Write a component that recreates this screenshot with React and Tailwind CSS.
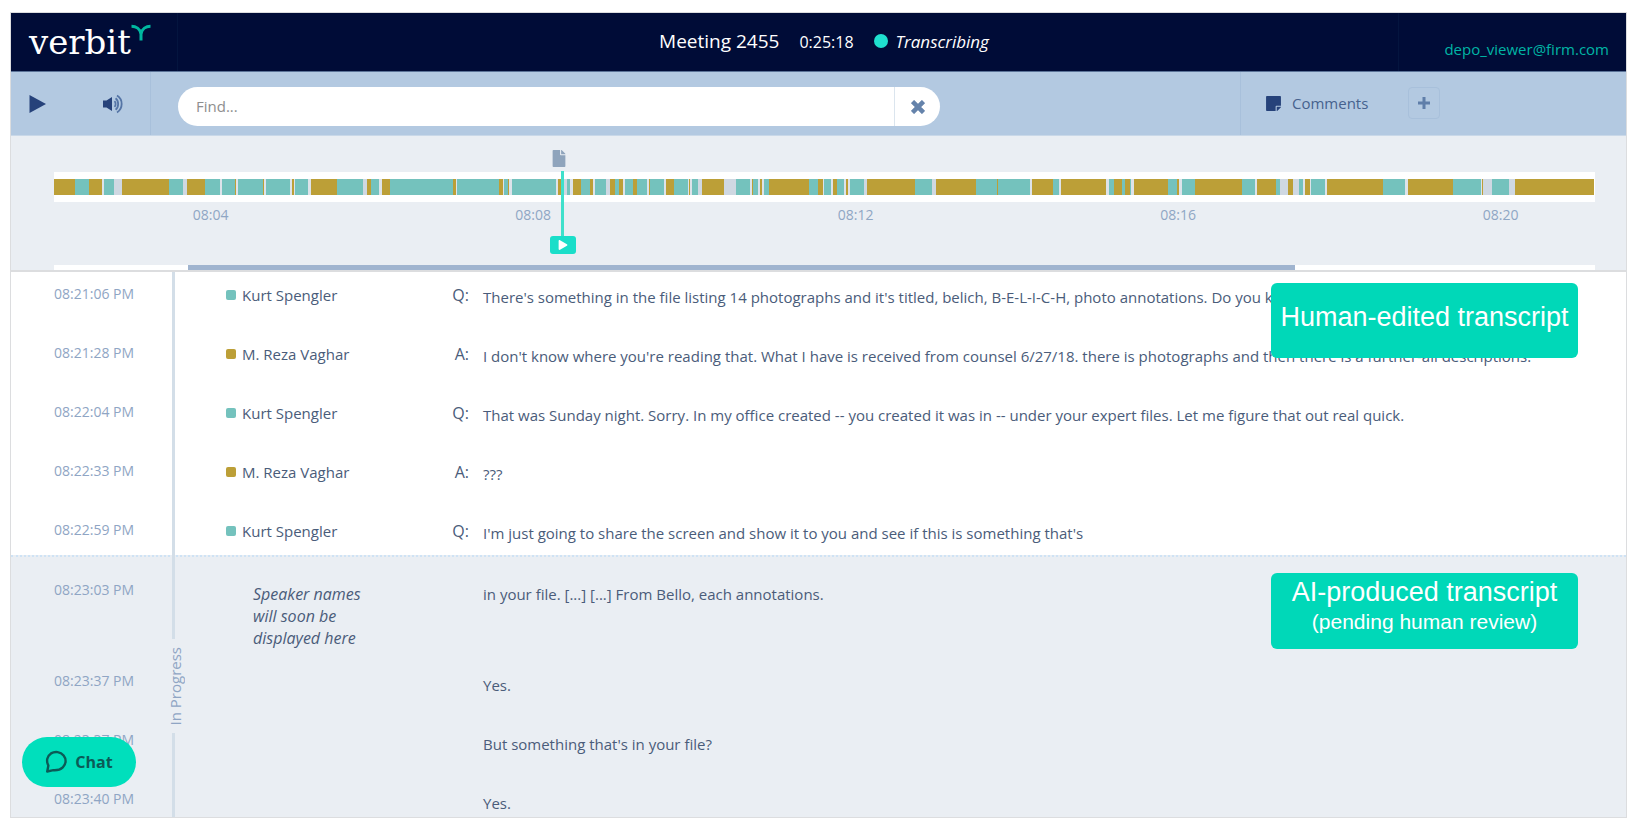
import React, { useState } from 'react';
import { FaFile, FaPlay, FaStickyNote } from 'react-icons/fa';

// speech segments on the timeline: [speaker, end position]
// k = Kurt, m = Reza, p = pause, w = short gap
const SEGMENTS = [
    ['m', 62], ['k', 106], ['m', 145], ['w', 149], ['k', 181], ['p', 205], ['m', 344], ['k', 388], ['p', 400],
    ['m', 452], ['k', 499], ['w', 504], ['k', 543], ['m', 546], ['w', 552], ['k', 627], ['m', 630], ['w', 635],
    ['k', 707], ['w', 715], ['m', 719], ['w', 722], ['k', 763], ['w', 770], ['m', 848], ['k', 927], ['p', 940],
    ['m', 950], ['k', 976], ['w', 983], ['m', 1007], ['k', 1198], ['m', 1205], ['w', 1209], ['k', 1335],
    ['m', 1346], ['w', 1350], ['k', 1364], ['m', 1367], ['w', 1375], ['k', 1508], ['w', 1514], ['m', 1526],
    ['p', 1540], ['k', 1549], ['w', 1557], ['m', 1582], ['k', 1608], ['m', 1618], ['w', 1625], ['k', 1656],
    ['p', 1668], ['m', 1683], ['k', 1697], ['m', 1707], ['w', 1714], ['k', 1738], ['m', 1749], ['k', 1780],
    ['w', 1787], ['m', 1790], ['k', 1832], ['w', 1838], ['m', 1862], ['k', 1902], ['w', 1905], ['m', 1910],
    ['w', 1916], ['k', 1932], ['p', 1945], ['m', 2010], ['p', 2046], ['k', 2088], ['w', 2095], ['m', 2099],
    ['k', 2112], ['w', 2119], ['m', 2124], ['w', 2131], ['k', 2147], ['m', 2267], ['k', 2293], ['m', 2308],
    ['w', 2312], ['k', 2331], ['w', 2337], ['m', 2351], ['k', 2372], ['w', 2377], ['m', 2383], ['w', 2389],
    ['k', 2432], ['p', 2440], ['m', 2583], ['k', 2635], ['p', 2646], ['m', 2768], ['k', 2831], ['m', 2834],
    ['k', 2930], ['w', 2936], ['m', 2999], ['k', 3016], ['w', 3022], ['m', 3157], ['w', 3166], ['k', 3182],
    ['m', 3204], ['w', 3206], ['k', 3215], ['m', 3229], ['k', 3233], ['w', 3240], ['m', 3343], ['k', 3370],
    ['m', 3376], ['w', 3385], ['k', 3425], ['m', 3564], ['k', 3605], ['w', 3612], ['m', 3668], ['k', 3680],
    ['p', 3705], ['m', 3718], ['p', 3736], ['k', 3748], ['w', 3754], ['m', 3771], ['w', 3774], ['k', 3815],
    ['w', 3821], ['m', 3989], ['k', 4055], ['w', 4063], ['m', 4199], ['k', 4284], ['w', 4287], ['m', 4290],
    ['p', 4316], ['k', 4368], ['p', 4385], ['m', 4622],
];
const TOTAL = 4622;

const SEGMENT_COLORS = {
    k: 'bg-[#74c2bd]',
    m: 'bg-[#bc9f37]',
    p: 'bg-[#cfd8e2]',
    w: 'bg-[#dde3ea]',
};

const TICKS = ['08:04', '08:08', '08:12', '08:16', '08:20'];

const EDITED = [
    { time: '08:21:06 PM', speaker: 'Kurt Spengler', mark: 'Q:', text: "There's something in the file listing 14 photographs and it's titled, belich, B-E-L-I-C-H, photo annotations. Do you know" },
    { time: '08:21:28 PM', speaker: 'M. Reza Vaghar', mark: 'A:', text: "I don't know where you're reading that. What I have is received from counsel 6/27/18. there is photographs and then there is a further-all descriptions." },
    { time: '08:22:04 PM', speaker: 'Kurt Spengler', mark: 'Q:', text: 'That was Sunday night. Sorry. In my office created -- you created it was in -- under your expert files. Let me figure that out real quick.' },
    { time: '08:22:33 PM', speaker: 'M. Reza Vaghar', mark: 'A:', text: '???' },
    { time: '08:22:59 PM', speaker: 'Kurt Spengler', mark: 'Q:', text: "I'm just going to share the screen and show it to you and see if this is something that's" },
];

const PENDING = [
    { time: '08:23:03 PM', note: 'Speaker names will soon be displayed here', text: 'in your file. [...] [...] From Bello, each annotations.' },
    { time: '08:23:37 PM', text: 'Yes.' },
    { time: '08:23:37 PM', text: "But something that's in your file?" },
    { time: '08:23:40 PM', text: 'Yes.' },
];

const Logo = () => (
    <a href="#" aria-label="verbit" className="flex items-start">
        <span className="font-['DejaVu_Serif',serif] text-[34px] leading-[42px] text-white">verbit</span>
        <svg viewBox="0 0 20 17" className="mt-[3px] h-[17px] w-5" fill="none" stroke="#00b8a0" strokeWidth="3">
            <path d="M0.5 2.2C5 2.2 9 5 10 9.5C11 5 15 2.2 19.5 2.2" />
            <path d="M10 8V16.5" />
        </svg>
    </a>
);

const Header = () => (
    <header className="flex h-[59px] border-b border-[#5b7398] bg-[#000c37] text-white">
        <div className="w-[167px] border-r border-[#04153f] pt-2 pl-[18px]">
            <Logo />
        </div>
        <div className="flex flex-1 items-center justify-center pb-[2px] pl-[72px]">
            <h1 className="text-[19px] leading-8">Meeting 2455</h1>
            <span className="ml-5 pt-[2px] text-base">0:25:18</span>
            <span className="ml-5 size-[14px] rounded-full bg-[#1fe0cf]" />
            <span className="ml-2 pt-[2px] text-[17px] italic">Transcribing</span>
        </div>
        <div className="flex w-[228px] justify-end border-l border-[#04153f] pt-6 pr-[17px]">
            <a href="#" className="text-[15px] leading-6 text-[#00b5a5]">depo_viewer@firm.com</a>
        </div>
    </header>
);

const Toolbar = () => {
    const [query, setQuery] = useState('');

    return (
        <div className="flex h-16 border-b border-[#c9d8e8] bg-[#b3c9e1]">
            <div className="flex w-[140px] items-start gap-14 border-r border-[#a8c0db] pt-[22px] pl-[18px] text-[#26427a]">
                <button aria-label="Play">
                    <svg viewBox="0 0 17 20" className="h-5 w-[17px]" fill="currentColor">
                        <path d="M0.5 1L17 10L0.5 19Z" />
                    </svg>
                </button>
                <button aria-label="Volume">
                    <svg viewBox="0 0 22 20" className="h-5 w-[22px]" fill="none">
                        <path d="M1 6.5H4.5L10 3V17L4.5 13.5H1Z" fill="currentColor" />
                        <path d="M12.5 7.2C14 8.6 14 11.4 12.5 12.8M13.6 4.3C17 7 17 13 13.6 15.7M15 1.6C21.2 5.4 21.2 14.6 15 18.4" stroke="#5575a6" strokeWidth="1.8" />
                    </svg>
                </button>
            </div>
            <div className="flex-1 pt-[15px] pl-[27px]">
                <div className="flex h-[39px] w-full max-w-[762px] overflow-hidden rounded-full bg-white">
                    <input
                        type="text"
                        aria-label="Find"
                        placeholder="Find..."
                        value={query}
                        onChange={(e) => setQuery(e.target.value)}
                        className="min-w-0 flex-1 pl-[18px] text-[15px] outline-none placeholder:text-[#8e8e8e]"
                    />
                    <button aria-label="Clear" onClick={() => setQuery('')} className="flex w-[46px] items-center justify-center border-l border-[#dbe5ee]">
                        <svg viewBox="0 0 14 14" className="size-[14px]" stroke="#6583ab" strokeWidth="4.5">
                            <path d="M1.5 1.5L12.5 12.5M12.5 1.5L1.5 12.5" />
                        </svg>
                    </button>
                </div>
            </div>
            <div className="flex w-[386px] items-start border-l border-[#a8c0db] pt-[15px] pl-6">
                <button className="flex h-8 items-center gap-[10px] text-[15px] text-[#46628e]">
                    <FaStickyNote className="size-[17px] text-[#26427a]" />
                    Comments
                </button>
                <button aria-label="Add comment" className="ml-10 flex size-8 items-center justify-center rounded-sm border border-[#a8c0db]">
                    <svg viewBox="0 0 12 12" className="size-3" stroke="#5f7ea9" strokeWidth="3">
                        <path d="M6 0V12M0 6H12" />
                    </svg>
                </button>
            </div>
        </div>
    );
};

const Timeline = () => (
    <div className="border-b-2 border-[#dcdddf] bg-[#eaeef3] pt-9 pr-[31px] pl-[43px]">
        <div className="relative bg-white py-[7px]">
            <div className="flex h-4">
                {SEGMENTS.map(([kind, end], i) => (
                    <div
                        key={end}
                        className={SEGMENT_COLORS[kind]}
                        style={{ width: `${((end - (i ? SEGMENTS[i - 1][1] : 0)) / TOTAL) * 100}%` }}
                    />
                ))}
            </div>
            {/* playhead with its note marker */}
            <div className="absolute -top-[22px] left-[33%] flex w-[26px] -translate-x-1/2 flex-col items-center">
                <FaFile className="mr-2 h-[17px] w-[14px] text-[#8fa4bc]" />
                <div className="mt-1 h-[65px] w-[3px] bg-[#3fe0cb]" />
                <button aria-label="Playhead" className="flex h-[18px] w-[26px] items-center justify-center rounded-[3px] bg-[#1adec9] text-white">
                    <FaPlay className="size-[10px]" />
                </button>
            </div>
        </div>
        <div className="flex pt-[3px] pl-[9%] text-sm leading-5 text-[#8fa6c4]">
            {TICKS.map((t) => (
                <span key={t} className="w-[23%] shrink-0 last:w-auto">{t}</span>
            ))}
        </div>
        <div className="mt-10 h-[5px] bg-white pl-[134px]">
            <div className="h-full w-[78.7%] bg-[#a0b4cf]" />
        </div>
    </div>
);

const Row = ({ row }) => (
    <li className="flex h-[59px] pt-[11px] last:h-[47px]">
        <time className="w-[215px] pl-[43px] text-sm leading-[22px] text-[#8fa5c4]">{row.time}</time>
        <div className="flex w-[205px] items-center gap-[6px] self-start text-[15px] leading-6">
            <span className={`size-[10px] rounded-[2px] ${row.mark === 'Q:' ? 'bg-[#74c2bd]' : 'bg-[#bc9f37]'}`} />
            {row.speaker}
        </div>
        <span className="w-[38px] text-right text-base leading-6">{row.mark}</span>
        <p className="min-w-0 flex-1 pl-[14px] text-[15px] leading-7 whitespace-nowrap">{row.text}</p>
    </li>
);

const PendingRow = ({ row }) => (
    <li className="flex h-[59px] first:h-[91px] last:h-[28px]">
        <time className="w-[242px] pl-[43px] text-sm leading-5 text-[#8fa5c4]">{row.time}</time>
        <p className="mt-[3px] mr-[110px] w-[120px] text-base leading-[22px] italic">{row.note}</p>
        <p className="min-w-0 flex-1 text-[15px] leading-7">{row.text}</p>
    </li>
);

export default function App() {
    return (
        <div className="min-h-screen bg-white pt-3 pr-3 pb-2 pl-[10px] font-['Open_Sans',sans-serif] text-[#4a5c7a]">
            <div className="relative overflow-hidden border border-[#dcdddf]">
                <Header />
                <Toolbar />
                <Timeline />

                <main className="relative">
                    <section className="relative">
                        <ol>
                            {EDITED.map((row) => <Row key={row.time} row={row} />)}
                        </ol>
                        <div className="absolute top-[11px] right-12 flex h-[75px] w-[307px] justify-center rounded-md bg-[#00d8b8] pt-[18px] font-['Liberation_Sans',sans-serif] text-[27px] leading-8 text-white">
                            Human-edited transcript
                        </div>
                    </section>

                    <section className="relative border-t-2 border-dotted border-[#cfe3f5] bg-[#eaeef3] pt-[23px]">
                        <ol>
                            {PENDING.map((row, i) => <PendingRow key={i} row={row} />)}
                        </ol>
                        <div className="absolute top-4 right-12 h-[76px] w-[307px] rounded-md bg-[#00d8b8] pt-[3px] text-center font-['Liberation_Sans',sans-serif] text-white">
                            <div className="text-[27px] leading-8">AI-produced transcript</div>
                            <div className="text-[21px] leading-7">(pending human review)</div>
                        </div>
                    </section>

                    {/* progress rail */}
                    <div className="absolute inset-y-0 left-[157px] flex w-[14px] flex-col">
                        <div className="ml-1 w-[3px] flex-1 bg-[#d3dee8]" />
                        {/* px runs along the text here, since the writing mode is vertical */}
                        <span className="rotate-180 self-center px-2 text-[15px] leading-[14px] text-[#8fa5c4] [writing-mode:vertical-rl]">In Progress</span>
                        <div className="ml-1 h-[84px] w-[3px] bg-[#d3dee8]" />
                    </div>
                </main>

                <button className="absolute bottom-[30px] left-[11px] flex h-[50px] w-[114px] items-center justify-center gap-2 rounded-full bg-[#00dfbc] text-base font-bold text-[#0b5b57]">
                    <svg viewBox="0 0 22 24" className="h-6 w-[22px]" fill="none" stroke="currentColor" strokeWidth="2.4" strokeLinejoin="round">
                        <path d="M2.2 21.5L3.4 15.6C1 11 2 6 6 3.4C10 1 15.5 1.6 18.6 5.4C21.5 9 21.2 14.2 17.8 17.4C15 20 11.5 20.4 8.4 20.2Z" />
                    </svg>
                    Chat
                </button>
            </div>
        </div>
    );
}
